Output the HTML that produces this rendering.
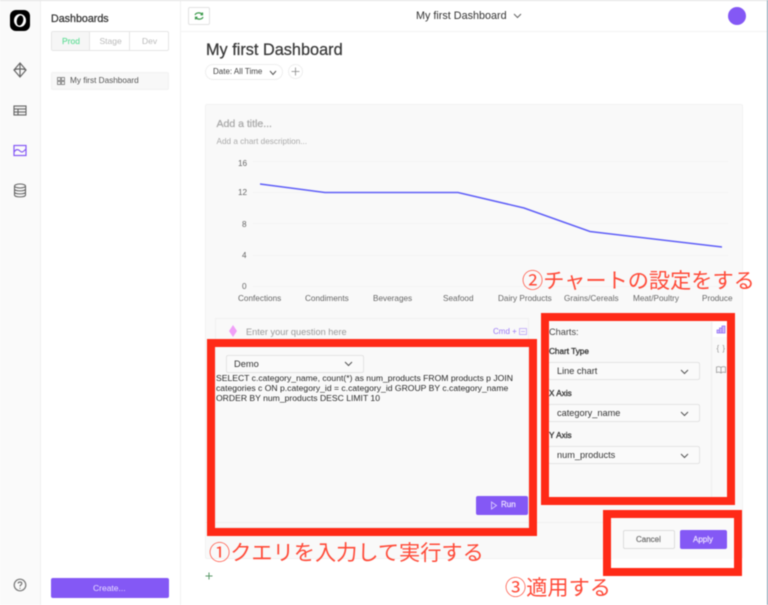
<!DOCTYPE html>
<html lang="ja"><head><meta charset="utf-8"><title>Dashboard</title>
<style>
html,body{margin:0;padding:0;width:768px;height:605px;overflow:hidden;background:#fff}
#r{position:relative;width:768px;height:605px;overflow:hidden;font-family:"Liberation Sans","Noto Sans CJK JP",sans-serif;color:#333;filter:blur(.45px)}
#r div,#r svg{position:absolute;box-sizing:border-box}
.t{white-space:nowrap;line-height:1}
.m{-webkit-text-stroke:.25px currentColor}
.sel{background:#fafafa;border:1px solid #e4e4e4;border-radius:2px}
.red{border:8px solid #ff2a17}
.rt{color:#ff4a38;white-space:nowrap;line-height:1;font-size:21.2px}
.ax{font-size:8.2px;color:#666;white-space:nowrap;line-height:1}
.lbl{font-size:8.2px;color:#333;white-space:nowrap;line-height:1;-webkit-text-stroke:.3px currentColor}
</style></head><body><div id="r">
<div style="left:0;top:0;width:768px;height:1px;background:#e2e2e2"></div>
<div style="left:767px;top:0;width:1px;height:605px;background:#7d99ab"></div>
<div style="left:0;top:1px;width:41px;height:604px;background:#fafafa;border-right:1px solid #f0f0f0"></div>
<div style="left:180px;top:1px;width:1px;height:604px;background:#f2f2f2"></div>
<div style="left:181px;top:31px;width:586px;height:1px;background:#f3f3f3"></div>

<svg style="left:10px;top:10px" width="20" height="21" viewBox="0 0 20 21"><rect width="20" height="21" rx="6" fill="#000"/><ellipse cx="10" cy="10.5" rx="6" ry="6.5" fill="#fff"/><ellipse cx="10" cy="10.5" rx="3.2" ry="5.2" fill="#000" transform="rotate(14 10 10.5)"/></svg>
<svg style="left:13px;top:62px" width="14" height="16" viewBox="0 0 14 16" fill="none" stroke="#666" stroke-width="1.2"><path d="M7 1 13 8 7 15 1 8Z M7 1V15 M1 8C4 6.5 10 6.5 13 8"/></svg>
<svg style="left:13px;top:104px" width="14" height="13" viewBox="0 0 14 13" fill="none" stroke="#666" stroke-width="1.1"><rect x="1" y="2" width="12" height="9" fill="#eee"/><path d="M1 5H13M1 8H13M5 5V11"/></svg>
<svg style="left:13px;top:144px" width="14" height="13" viewBox="0 0 14 13" fill="none" stroke="#8458f5" stroke-width="1.2"><rect x="1" y="1.5" width="12" height="10"/><path d="M1 8C3 5 5 5 7 7S10 8 13 5"/></svg>
<svg style="left:13px;top:183px" width="14" height="15" viewBox="0 0 14 15" fill="none" stroke="#666" stroke-width="1.1"><ellipse cx="7" cy="3" rx="5.5" ry="2"/><path d="M1.5 3V12C1.5 14.5 12.5 14.5 12.5 12V3M1.5 6C1.5 8.5 12.5 8.5 12.5 6M1.5 9C1.5 11.5 12.5 11.5 12.5 9"/></svg>
<svg style="left:13px;top:578px" width="14" height="14" viewBox="0 0 14 14" fill="none" stroke="#777" stroke-width="1.2"><circle cx="7" cy="7" r="5.8"/><path d="M5.2 5.5C5.2 3.5 8.8 3.5 8.8 5.5C8.8 7 7 6.8 7 8.5M7 9.8V10.8"/></svg>

<div class="t m" style="left:51px;top:13.5px;font-size:10.7px;color:#333">Dashboards</div>
<div style="left:51px;top:31px;width:118px;height:20px;border:1px solid #e6e6e6;border-radius:2px;background:#fff"></div>
<div style="left:52px;top:32px;width:38px;height:18px;background:#f6f6f6;border-right:1px solid #e6e6e6"></div>
<div style="left:129px;top:32px;width:1px;height:18px;background:#e6e6e6"></div>
<div class="t m" style="left:62px;top:36.5px;font-size:8.5px;color:#6fe0a0">Prod</div>
<div class="t" style="left:99.5px;top:36.5px;font-size:8.5px;color:#bbb">Stage</div>
<div class="t" style="left:142px;top:36.5px;font-size:8.5px;color:#bbb">Dev</div>
<div style="left:51px;top:72px;width:118px;height:18px;background:#f8f8f8;border:1px solid #f2f2f2;border-radius:2px"></div>
<svg style="left:57px;top:77px" width="8" height="8" viewBox="0 0 8 8" fill="none" stroke="#777" stroke-width=".8"><rect x=".5" y=".5" width="3" height="3"/><rect x="4.5" y=".5" width="3" height="3"/><rect x=".5" y="4.5" width="3" height="3"/><rect x="4.5" y="4.5" width="3" height="3"/></svg>
<div class="t" style="left:70px;top:76.5px;font-size:8.2px;color:#555">My first Dashboard</div>
<div style="left:51px;top:578px;width:118px;height:20px;background:#8458f5;border-radius:2px"></div>
<div class="t" style="left:93px;top:584px;font-size:8.5px;color:#e8dcff">Create...</div>

<div style="left:188px;top:7px;width:22px;height:18px;border:1px solid #e2e2e2;border-radius:2px;background:#fff"></div>
<svg style="left:193px;top:10px" width="12" height="12" viewBox="0 0 12 12" fill="none" stroke="#3c9a4c" stroke-width="1.2"><path d="M2 5C3 2.5 7.5 2 9.5 4.5M10 7C9 9.5 4.5 10 2.5 7.5M9.5 2.5V4.8H7.5M2.5 9.5V7.2H4.5"/></svg>
<div class="t" style="left:416px;top:10.5px;font-size:10.8px;color:#333">My first Dashboard</div>
<svg style="left:513px;top:13px" width="9" height="6" viewBox="0 0 9 6" fill="none" stroke="#666" stroke-width="1"><path d="M1 1 4.5 4.5 8 1"/></svg>
<div style="left:728px;top:7px;width:18px;height:18px;border-radius:50%;background:#8458f5"></div>

<div class="t m" style="left:206px;top:41.5px;font-size:16.3px;color:#3a3a3a">My first Dashboard</div>
<div style="left:205px;top:64px;width:78px;height:16px;border:1px solid #eee;border-radius:8px;background:#fff"></div>
<div class="t" style="left:213px;top:68px;font-size:8px;color:#444">Date: All Time</div>
<svg style="left:269px;top:70px" width="8" height="6" viewBox="0 0 8 6" fill="none" stroke="#555" stroke-width="1"><path d="M1 1 4 4.5 7 1"/></svg>
<div style="left:288px;top:64px;width:15px;height:15px;border:1px solid #eee;border-radius:50%"></div>
<svg style="left:291px;top:67px" width="9" height="9" viewBox="0 0 9 9" stroke="#888" stroke-width=".8"><path d="M4.5 .5V8.5M.5 4.5H8.5"/></svg>

<div style="left:205px;top:104px;width:538px;height:455px;background:#f9f9f9;border:1px solid #f2f2f2;border-radius:2px"></div>
<div class="t m" style="left:216.5px;top:118.5px;font-size:10.5px;color:#aaa">Add a title...</div>
<div class="t" style="left:216.5px;top:138px;font-size:8.2px;color:#aaa">Add a chart description...</div>

<svg style="left:205px;top:150px" width="540" height="150" viewBox="0 0 540 150" fill="none"><g stroke="#f4f4f4" stroke-width="1"><path d="M48 11.5H523M48 42.5H523M48 73.5H523M48 105.5H523M48 136.5H523"/></g><path d="M55 34 120 42.5H253L319 58 385 81.5 517 97" stroke="#5f5ff8" stroke-width="1.5"/></svg>
<div class="ax" style="left:238px;top:160px">16</div>
<div class="ax" style="left:238px;top:189px">12</div>
<div class="ax" style="left:242px;top:221px">8</div>
<div class="ax" style="left:242px;top:252px">4</div>
<div class="ax" style="left:242px;top:283px">0</div>
<div class="ax" style="left:238px;top:295px">Confections</div>
<div class="ax" style="left:305px;top:295px">Condiments</div>
<div class="ax" style="left:373px;top:295px">Beverages</div>
<div class="ax" style="left:443px;top:295px">Seafood</div>
<div class="ax" style="left:498px;top:295px">Dairy Products</div>
<div class="ax" style="left:564px;top:295px">Grains/Cereals</div>
<div class="ax" style="left:633px;top:295px">Meat/Poultry</div>
<div class="ax" style="left:702px;top:295px">Produce</div>

<div style="left:215px;top:318px;width:314px;height:210px;background:#f9f9f9;border:1px solid #f0f0f0"></div>
<svg style="left:229px;top:325px" width="8" height="12" viewBox="0 0 8 12"><path d="M4 0 8 6 4 12 0 6Z" fill="#f0a0f8"/></svg>
<div class="t" style="left:246px;top:327.5px;font-size:9.2px;color:#999">Enter your question here</div>
<div class="t" style="left:493px;top:327.5px;font-size:8px;color:#9a78f5">Cmd +</div>
<svg style="left:519px;top:328px" width="8" height="7" viewBox="0 0 8 7" fill="none" stroke="#b49bf8" stroke-width=".7"><rect x=".5" y=".5" width="7" height="6"/><path d="M2 3.5H6"/></svg>

<div class="sel" style="left:226px;top:355px;width:138px;height:18px"></div>
<div class="t" style="left:234px;top:359.5px;font-size:9.3px;color:#333">Demo</div>
<svg style="left:344px;top:361px" width="9" height="6" viewBox="0 0 9 6" fill="none" stroke="#555" stroke-width="1"><path d="M1 1 4.5 4.5 8 1"/></svg>
<div class="t" style="left:216px;top:374px;font-size:8.6px;color:#2a2a2a">SELECT c.category_name, count(*) as num_products FROM products p JOIN</div>
<div class="t" style="left:216px;top:384px;font-size:8.6px;color:#2a2a2a">categories c ON p.category_id = c.category_id GROUP BY c.category_name</div>
<div class="t" style="left:216px;top:394px;font-size:8.6px;color:#2a2a2a">ORDER BY num_products DESC LIMIT 10</div>
<div style="left:476px;top:496px;width:52px;height:19px;background:#8458f5;border-radius:2px"></div>
<svg style="left:490px;top:501px" width="8" height="9" viewBox="0 0 8 9" fill="none" stroke="#d8c8ff" stroke-width=".9"><path d="M1.5 1 6.5 4.5 1.5 8Z"/></svg>
<div class="t m" style="left:501px;top:501px;font-size:8px;color:#e8dcff">Run</div>
<div style="left:215px;top:522px;width:314px;height:1px;background:#eee"></div>

<div style="left:711px;top:322px;width:1px;height:175px;background:#eee"></div>
<div style="left:713px;top:322px;width:14px;height:15px;background:#fff"></div>
<svg style="left:716px;top:325px" width="10" height="9" viewBox="0 0 10 9" fill="#c9b6fa" stroke="#8f6cf5" stroke-width=".7"><path d="M1 8V5H3.5V8ZM3.5 8V3H6V8ZM6 8V1H9V8Z"/></svg>
<div class="t" style="left:716.5px;top:345px;font-size:8px;color:#999;letter-spacing:.5px">{ }</div>
<svg style="left:716px;top:366px" width="10" height="8" viewBox="0 0 10 8" fill="none" stroke="#999" stroke-width=".8"><path d="M5 1.5C4 .5 2 .5 .5 1V6.5C2 6 4 6 5 7 6 6 8 6 9.5 6.5V1C8 .5 6 .5 5 1.5ZM5 1.5V7"/></svg>

<div class="t" style="left:549px;top:327.5px;font-size:9.2px;color:#444">Charts:</div>
<div class="lbl" style="left:549px;top:347.5px">Chart Type</div>
<div class="sel" style="left:548px;top:362px;width:152px;height:18px"></div>
<div class="t" style="left:557px;top:366.5px;font-size:9.2px;color:#333">Line chart</div>
<div class="lbl" style="left:549px;top:389.5px">X Axis</div>
<div class="sel" style="left:548px;top:404px;width:152px;height:18px"></div>
<div class="t" style="left:557px;top:408.5px;font-size:9.2px;color:#333">category_name</div>
<div class="lbl" style="left:549px;top:431.5px">Y Axis</div>
<div class="sel" style="left:548px;top:446px;width:152px;height:18px"></div>
<div class="t" style="left:557px;top:450.5px;font-size:9.2px;color:#333">num_products</div>
<svg style="left:680px;top:369px" width="9" height="6" viewBox="0 0 9 6" fill="none" stroke="#555" stroke-width="1"><path d="M1 1 4.5 4.5 8 1"/></svg>
<svg style="left:680px;top:411px" width="9" height="6" viewBox="0 0 9 6" fill="none" stroke="#555" stroke-width="1"><path d="M1 1 4.5 4.5 8 1"/></svg>
<svg style="left:680px;top:453px" width="9" height="6" viewBox="0 0 9 6" fill="none" stroke="#555" stroke-width="1"><path d="M1 1 4.5 4.5 8 1"/></svg>

<div style="left:612px;top:518px;width:122px;height:50px;background:#fff"></div>
<div style="left:205px;top:522px;width:538px;height:1px;background:#f0f0f0"></div>
<div style="left:612px;top:518px;width:122px;height:41px;background:#fafafa"></div>
<div style="left:623px;top:530px;width:52px;height:19px;border:1px solid #ddd;border-radius:2px;background:#fafafa"></div>
<div class="t m" style="left:636px;top:535.5px;font-size:8px;color:#777">Cancel</div>
<div style="left:680px;top:530px;width:47px;height:19px;background:#8458f5;border-radius:2px"></div>
<div class="t m" style="left:693px;top:535.5px;font-size:8px;color:#e8dcff">Apply</div>

<div class="red" style="left:207px;top:339px;width:330px;height:197px"></div>
<div class="red" style="left:541px;top:313px;width:194px;height:192px"></div>
<div class="red" style="left:603px;top:510px;width:139px;height:66px"></div>

<div class="rt" style="left:209px;top:543px">①クエリを入力して実行する</div>
<div class="rt" style="left:522px;top:270.5px">②チャートの設定をする</div>
<div class="rt" style="left:505px;top:578px">③適用する</div>

<svg style="left:205px;top:572px" width="8" height="8" viewBox="0 0 8 8" stroke="#5a9a68" stroke-width="1"><path d="M4 .5V7.5M.5 4H7.5"/></svg>
</div></body></html>
